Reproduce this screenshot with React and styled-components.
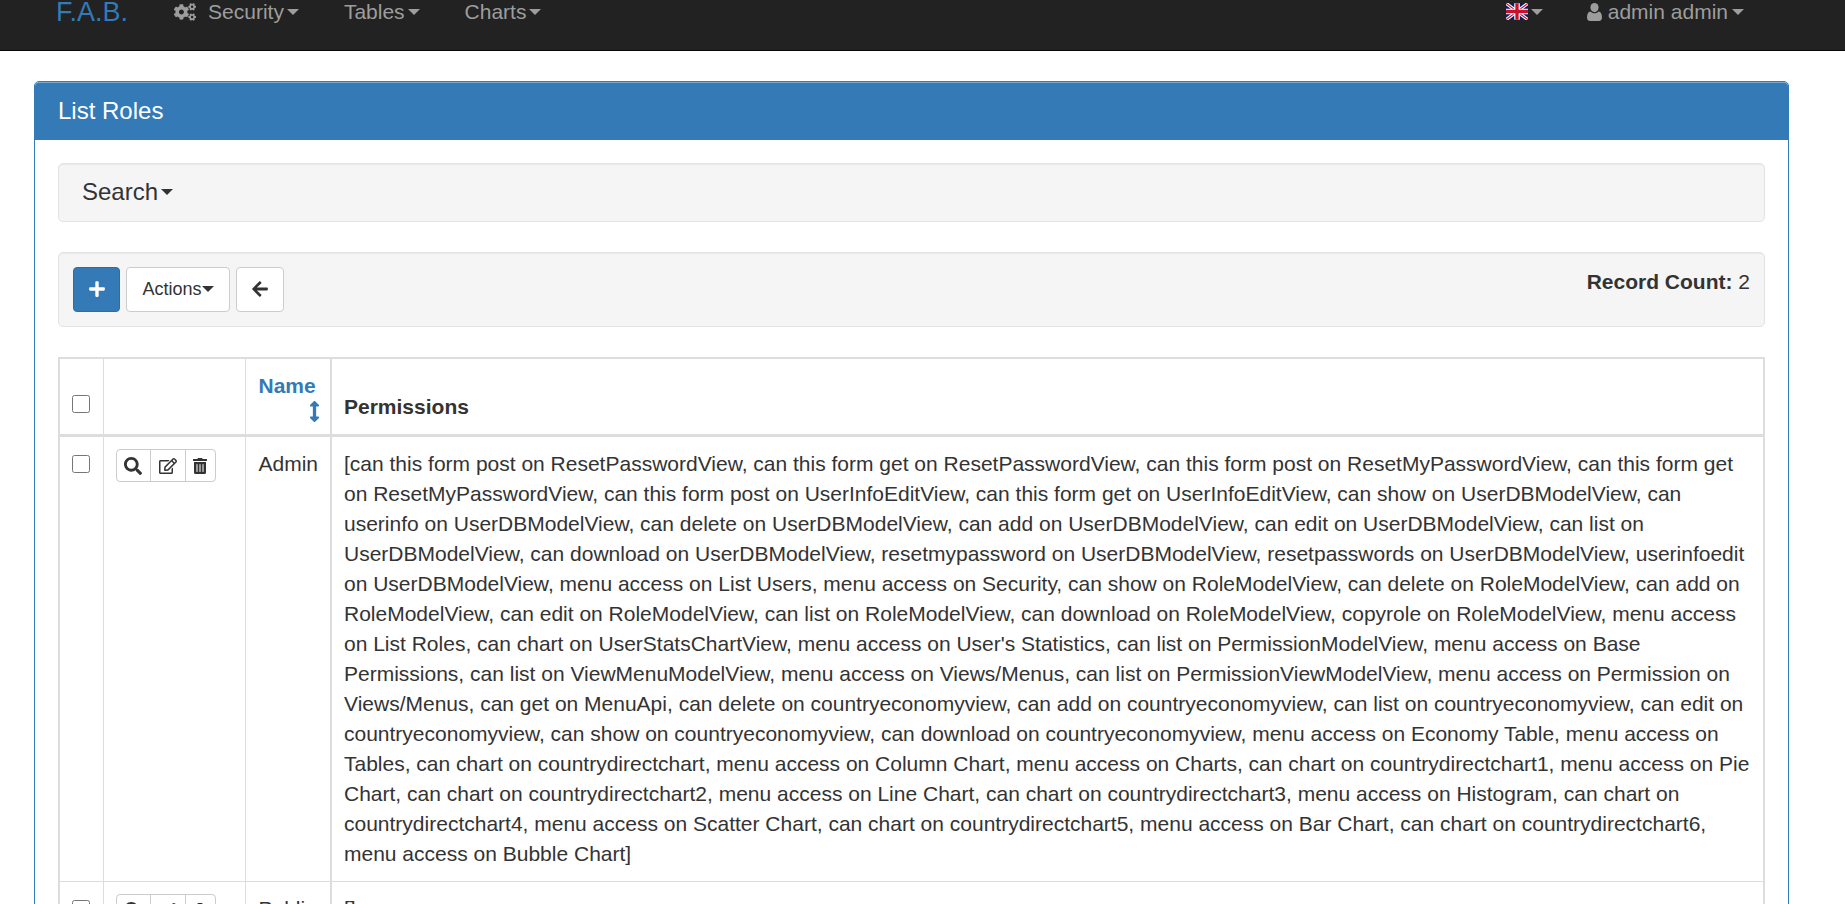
import React from 'react';
import styled, { createGlobalStyle } from 'styled-components';
import { FaCogs, FaPlus, FaArrowLeft, FaSearch, FaRegEdit, FaTrashAlt, FaArrowsAltV } from 'react-icons/fa';

const GlobalStyle = createGlobalStyle`
  html, body {
    margin: 0;
    height: 100%;
    overflow: hidden;
    background: #fff;
  }
  body {
    font-family: "Liberation Sans", Arial, sans-serif;
    font-size: 21px;
    line-height: 30px;
    color: #333;
  }
  * { box-sizing: border-box; }
`;

const Navbar = styled.nav`
  height: 51px;
  background: #222;
  border-bottom: 1px solid #080808;
  display: flex;
  align-items: flex-start;
  padding: 0 56px;
  color: #9d9d9d;
`;

const Brand = styled.a`
  color: #337ab7;
  font-size: 27px;
  line-height: 25px;
  margin-right: 46px;
`;

const NavItem = styled.a`
  display: flex;
  align-items: center;
  height: 23px;
  margin-right: ${props => props.gap || 45}px;
  margin-left: ${props => props.push ? 'auto' : 0};
`;

const Caret = styled.span`
  display: inline-block;
  width: 0;
  height: 0;
  margin-left: ${props => props.gap ?? 3}px;
  border-top: 6px solid ${props => props.color || 'currentColor'};
  border-left: 6px solid transparent;
  border-right: 6px solid transparent;
`;

const Page = styled.main`
  padding: 30px 56px 0 34px;
`;

const Panel = styled.section`
  border: 1px solid #337ab7;
  border-radius: 5px;
  background: #fff;
`;

const PanelHeading = styled.h3`
  margin: 0;
  height: 58px;
  padding: 0 23px 2px;
  display: flex;
  align-items: center;
  font-size: 24px;
  font-weight: 400;
  color: #fff;
  background: #337ab7;
  border-top: 1px solid #7fabd0;
  border-radius: 4px 4px 0 0;
`;

const PanelBody = styled.div`
  padding: 23px 23px 23px 23px;
`;

const Well = styled.div`
  background: #f5f5f5;
  border: 1px solid #e3e3e3;
  border-radius: 5px;
  box-shadow: inset 0 1px 1px rgba(0, 0, 0, .05);
`;

const SearchWell = styled(Well)`
  height: 59px;
  padding: 0 23px 2px;
  display: flex;
  align-items: center;
  font-size: 24px;
  margin-bottom: 30px;
`;

const ActionsWell = styled(Well)`
  height: 75px;
  padding: 14px;
  margin-bottom: 30px;
  display: flex;
  align-items: flex-start;
`;

const Button = styled.button`
  height: 45px;
  width: ${props => props.width}px;
  margin-right: 6px;
  padding: 0 0 2px;
  display: flex;
  align-items: center;
  justify-content: center;
  font: inherit;
  font-size: 18px;
  border-radius: 4px;
  color: ${props => props.primary ? '#fff' : '#333'};
  background: ${props => props.primary ? '#337ab7' : '#fff'};
  border: 1px solid ${props => props.primary ? '#2e6da4' : '#ccc'};
`;

const RecordCount = styled.div`
  margin-left: auto;
`;

const Table = styled.table`
  width: 100%;
  border-collapse: collapse;
  table-layout: fixed;
  border: 2px solid #ddd;
`;

const Th = styled.th`
  padding: 12px;
  padding-left: ${props => props.thick ? 13 : 12}px;
  text-align: left;
  vertical-align: bottom;
  border: 1px solid #ddd;
  border-bottom: 3px solid #ddd;
  border-right-width: ${props => props.thick ? 2 : 1}px;
`;

const SortLink = styled.a`
  color: #337ab7;
  display: block;
`;

const SortIcon = styled.span`
  display: flex;
  justify-content: flex-end;
  height: 21px;
  margin-right: -2px;
  align-items: center;
  svg {
    width: 11px;
    height: 21px;
  }
`;

const Td = styled.td`
  padding: 12px;
  padding-left: ${props => props.thick ? 13 : 12}px;
  vertical-align: top;
  border: 1px solid #ddd;
  border-right-width: ${props => props.thick ? 2 : 1}px;
`;

const Check = styled.input.attrs({ type: 'checkbox' })`
  width: 18px;
  height: 18px;
  margin: ${props => props.top}px 0 ${props => props.bottom || 0}px 0;
  display: block;
`;

const BtnGroup = styled.div`
  display: inline-flex;
  height: 33px;
  border: 1px solid #ccc;
  border-radius: 4px;
  background: #fff;
  vertical-align: top;
`;

const GroupBtn = styled.span`
  width: ${props => props.width}px;
  display: flex;
  align-items: center;
  justify-content: center;
  font-size: 18px;
  border-left: ${props => props.first ? 0 : '1px solid #ccc'};
`;

const Flag = () => (
  <svg width="22" height="17" viewBox="0 0 60 45">
    <rect width="60" height="45" fill="#012169" />
    <path d="M0 0L60 45M60 0L0 45" stroke="#fff" strokeWidth="9" />
    <path d="M0 0L60 45M60 0L0 45" stroke="#c8102e" strokeWidth="3" />
    <path d="M30 0V45M0 22.5H60" stroke="#fff" strokeWidth="15" />
    <path d="M30 0V45M0 22.5H60" stroke="#c8102e" strokeWidth="9" />
  </svg>
);

const UserIcon = () => (
  <svg width="15" height="18" viewBox="0 0 15 18" fill="currentColor" style={{ marginRight: 6 }}>
    <ellipse cx="7.5" cy="4.6" rx="4.1" ry="4.6" />
    <path d="M3.4 8.4C4.4 9.6 5.9 10.2 7.5 10.2S10.6 9.6 11.6 8.4C13.8 8.8 15 10.8 15 14.6 15 16.8 13.8 18 12 18H3C1.2 18 0 16.8 0 14.6 0 10.8 1.2 8.8 3.4 8.4Z" />
  </svg>
);

const adminPermissions = "[can this form post on ResetPasswordView, can this form get on ResetPasswordView, can this form post on ResetMyPasswordView, can this form get on ResetMyPasswordView, can this form post on UserInfoEditView, can this form get on UserInfoEditView, can show on UserDBModelView, can userinfo on UserDBModelView, can delete on UserDBModelView, can add on UserDBModelView, can edit on UserDBModelView, can list on UserDBModelView, can download on UserDBModelView, resetmypassword on UserDBModelView, resetpasswords on UserDBModelView, userinfoedit on UserDBModelView, menu access on List Users, menu access on Security, can show on RoleModelView, can delete on RoleModelView, can add on RoleModelView, can edit on RoleModelView, can list on RoleModelView, can download on RoleModelView, copyrole on RoleModelView, menu access on List Roles, can chart on UserStatsChartView, menu access on User's Statistics, can list on PermissionModelView, menu access on Base Permissions, can list on ViewMenuModelView, menu access on Views/Menus, can list on PermissionViewModelView, menu access on Permission on Views/Menus, can get on MenuApi, can delete on countryeconomyview, can add on countryeconomyview, can list on countryeconomyview, can edit on countryeconomyview, can show on countryeconomyview, can download on countryeconomyview, menu access on Economy Table, menu access on Tables, can chart on countrydirectchart, menu access on Column Chart, menu access on Charts, can chart on countrydirectchart1, menu access on Pie Chart, can chart on countrydirectchart2, menu access on Line Chart, can chart on countrydirectchart3, menu access on Histogram, can chart on countrydirectchart4, menu access on Scatter Chart, can chart on countrydirectchart5, menu access on Bar Chart, can chart on countrydirectchart6, menu access on Bubble Chart]";

const RowActions = () => (
  <BtnGroup>
    <GroupBtn first width={33}><FaSearch /></GroupBtn>
    <GroupBtn width={35}><FaRegEdit /></GroupBtn>
    <GroupBtn width={30}><FaTrashAlt size={16} /></GroupBtn>
  </BtnGroup>
);

const Row = ({ name, permissions }) => (
  <tr>
    <Td><Check top={6} /></Td>
    <Td><RowActions /></Td>
    <Td thick>{name}</Td>
    <Td>{permissions}</Td>
  </tr>
);

const App = () => (
  <>
    <GlobalStyle />
    <Navbar>
      <Brand>F.A.B.</Brand>
      <NavItem>
        <FaCogs size={22} style={{ marginRight: 12 }} />
        Security<Caret />
      </NavItem>
      <NavItem>Tables<Caret /></NavItem>
      <NavItem>Charts<Caret /></NavItem>
      <NavItem push gap={44}><Flag /><Caret /></NavItem>
      <NavItem>
        <UserIcon />
        admin admin<Caret gap={4} />
      </NavItem>
    </Navbar>
    <Page>
      <Panel>
        <PanelHeading>List Roles</PanelHeading>
        <PanelBody>
          <SearchWell>Search<Caret /></SearchWell>
          <ActionsWell>
            <Button primary width={47}><FaPlus /></Button>
            <Button width={104}>Actions<Caret color="#333" gap={0} /></Button>
            <Button width={48}><FaArrowLeft size={18} /></Button>
            <RecordCount><b>Record Count:</b> 2</RecordCount>
          </ActionsWell>
          <Table>
            <colgroup>
              <col style={{ width: 44 }} />
              <col style={{ width: 142 }} />
              <col style={{ width: 86 }} />
              <col />
            </colgroup>
            <thead>
              <tr>
                <Th><Check top={0} bottom={9} /></Th>
                <Th />
                <Th thick>
                  <SortLink>Name<SortIcon><FaArrowsAltV /></SortIcon></SortLink>
                </Th>
                <Th>Permissions</Th>
              </tr>
            </thead>
            <tbody>
              <Row name="Admin" permissions={adminPermissions} />
              <Row name="Public" permissions="[]" />
            </tbody>
          </Table>
        </PanelBody>
      </Panel>
    </Page>
  </>
);

export default App;
